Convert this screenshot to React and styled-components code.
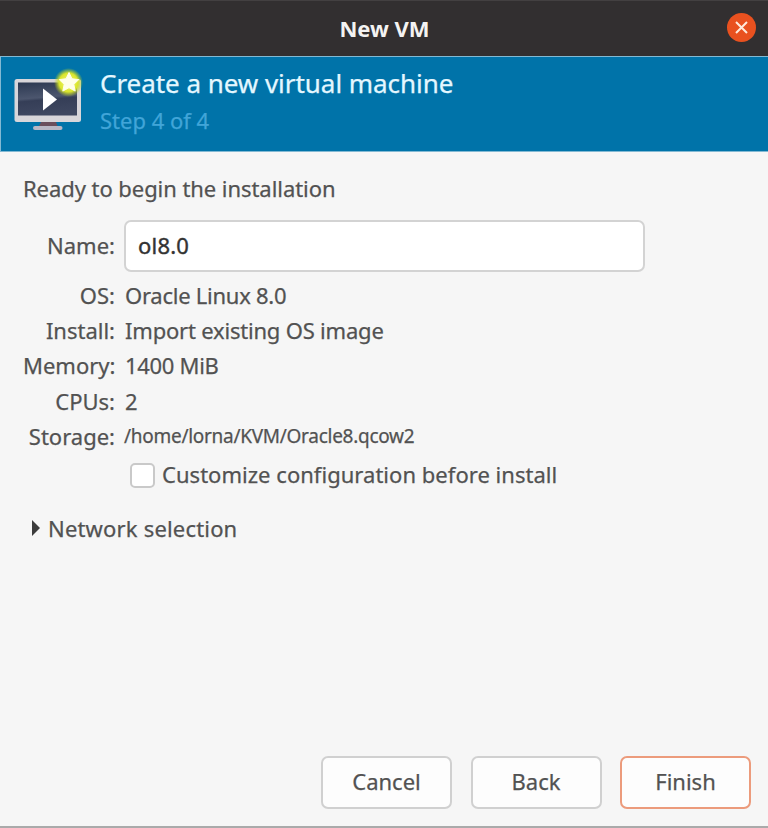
import React from "react";
import styled, { createGlobalStyle } from "styled-components";

const Global = createGlobalStyle`
  *, *::before, *::after { box-sizing: border-box; }
  body { margin: 0; background: #f6f6f6; }
`;

const Window = styled.main`
  display: flex;
  flex-direction: column;
  width: 768px;
  height: 828px;
  overflow: hidden;
  background: #f6f6f6;
  border-bottom: 2px solid #aaaaaa;
  color: #525252;
  font: 400 22px/30px "Noto Sans", sans-serif;
  -webkit-text-stroke: 0.25px currentColor;
  white-space: nowrap;
`;

const Text = styled.span`
  letter-spacing: ${(p) => p.$track || 0}px;
`;

const TitleBar = styled.header`
  display: grid;
  grid-template-columns: 60px 1fr 60px;
  align-items: center;
  height: 56px;
  padding-bottom: 2px;
  background: #322f30;
  border-top: 1px solid #434041;
  color: #f4f3f2;
  font-size: 22px;
  font-weight: 700;
  text-align: center;
  -webkit-text-stroke: 0;
`;

const TitleText = styled(Text)`
  grid-column: 2;
  padding-left: 1px;
`;

const CloseButton = styled.button`
  grid-column: 3;
  display: grid;
  place-items: center;
  width: 29px;
  height: 29px;
  margin-left: 19px;
  padding: 0;
  border: 0;
  border-radius: 50%;
  background: #e9511f;
`;

const Banner = styled.section`
  display: flex;
  flex: none;
  height: 96px;
  padding: 10px 0 0 13px;
  background: #0073a9;
  border: 1px solid #83b9d3;
  border-width: 1px 0 1px 1px;
`;

const BannerText = styled.div`
  display: flex;
  flex-direction: column;
  margin-left: 16px;
`;

const Heading = styled.h1`
  margin: 0;
  color: #e4f7ff;
  font-size: 26px;
  font-weight: 400;
  line-height: 32px;
`;

const Step = styled.p`
  margin: 6px 0 0;
  color: #41a5d8;
  line-height: 30px;
`;

const Body = styled.section`
  display: flex;
  flex: 1;
  flex-direction: column;
  padding: 21px 17px 17px 23px;
`;

const Intro = styled.p`
  margin: 0;
  height: 47px;
`;

const Row = styled.div`
  display: grid;
  grid-template-columns: 92px 1fr;
  column-gap: 9px;
  align-items: center;
  height: ${(p) => p.$height || 35.4}px;
`;

const Label = styled.span`
  text-align: right;
  padding-bottom: ${(p) => (p.$raised ? 2 : 0)}px;
`;

const Value = styled(Text)`
  padding-left: 1px;
`;

const NameField = styled.input`
  width: 521px;
  height: 52px;
  padding: 0 12px 2px;
  border: 2px solid #d3d3d3;
  border-radius: 7px;
  outline: none;
  background: #fff;
  color: #333;
  font: inherit;
  letter-spacing: 0.2px;
  -webkit-text-stroke: 0.4px currentColor;
`;

const Details = styled.div`
  margin-top: 5px;
`;

const Path = styled(Text)`
  font-size: 19px;
`;

const CheckRow = styled.label`
  display: flex;
  align-items: center;
  gap: 7px;
  height: 40px;
  margin-left: 107px;
`;

const CheckBox = styled.input`
  appearance: none;
  width: 25px;
  height: 25px;
  margin: 3px 0 0;
  border: 2px solid #c9c9c9;
  border-radius: 5px;
  background: #fff;
`;

const Expander = styled.div`
  display: flex;
  align-items: center;
  gap: 8px;
  margin: 19px 0 0 9px;
`;

const Actions = styled.footer`
  display: flex;
  justify-content: flex-end;
  gap: 18.500px;
  margin-top: auto;
`;

const Button = styled.button`
  width: 131px;
  height: 53px;
  padding: 0 0 3px;
  border: 2px solid ${(p) => (p.$primary ? "#ec9b7c" : "#d0d0d0")};
  border-radius: 7px;
  background: #fdfdfd;
  color: #525252;
  font: inherit;
  -webkit-text-stroke: inherit;
`;

function MonitorIcon() {
  return (
    <svg width="70" height="66" viewBox="0 -1 70 66">
      <defs>
        <linearGradient id="screen" x1="0" y1="0" x2="0.15" y2="1">
          <stop offset="0" stopColor="#2b3851" />
          <stop offset=".5" stopColor="#4c566e" />
          <stop offset=".58" stopColor="#353e57" />
          <stop offset="1" stopColor="#3e4760" />
        </linearGradient>
        <radialGradient id="glow">
          <stop offset="0" stopColor="#f8f97c" />
          <stop offset=".65" stopColor="#d9e52b" />
          <stop offset="1" stopColor="#b6cf22" stopOpacity="0" />
        </radialGradient>
      </defs>
      <rect x="0.5" y="11" width="66.500" height="43" rx="2.500" fill="#d8d6da" />
      <rect x="4" y="14.500" width="59" height="33" fill="url(#screen)" />
      <path d="M27 54h15l1.500 4H25z" fill="#6b4f5c" />
      <rect x="19" y="58" width="29.500" height="4" rx="2" fill="#b9b7c4" />
      <path d="M29 20.500v22l14-11z" fill="#fff" />
      <circle cx="54.500" cy="14.500" r="14.500" fill="url(#glow)" />
      <path d="M55 4.500l3 6.300 6.800.8-5 4.700 1.400 6.800-6.200-3.400-6.200 3.400 1.400-6.800-5-4.700 6.800-.8z" fill="#ffffe8" stroke="#ffffe8" strokeLinejoin="round" />
    </svg>
  );
}

export default function App() {
  return (
    <Window>
      <Global />
      <TitleBar>
        <TitleText>New VM</TitleText>
        <CloseButton aria-label="Close">
          <svg width="13" height="13" viewBox="0 0 13 13" stroke="#ffeadb" strokeWidth="2">
            <path d="M1 1l11 11M12 1L1 12" />
          </svg>
        </CloseButton>
      </TitleBar>
      <Banner>
        <MonitorIcon />
        <BannerText>
          <Heading><Text $track={-0.04}>Create a new virtual machine</Text></Heading>
          <Step><Text>Step 4 of 4</Text></Step>
        </BannerText>
      </Banner>
      <Body>
        <Intro><Text $track={-0.06}>Ready to begin the installation</Text></Intro>
        <Row $height={52}><Label $raised>Name:</Label><NameField defaultValue="ol8.0" aria-label="Name" /></Row>
        <Details>
          <Row><Label>OS:</Label><Value $track={-0.25}>Oracle Linux 8.0</Value></Row>
          <Row><Label>Install:</Label><Value $track={-0.2}>Import existing OS image</Value></Row>
          <Row><Label>Memory:</Label><Value $track={-0.3}>1400 MiB</Value></Row>
          <Row><Label>CPUs:</Label><Value>2</Value></Row>
          <Row><Label>Storage:</Label><Path $track={-0.28}>/home/lorna/KVM/Oracle8.qcow2</Path></Row>
        </Details>
        <CheckRow><CheckBox type="checkbox" /><Text $track={0.03}>Customize configuration before install</Text></CheckRow>
        <Expander>
          <svg width="8" height="16" viewBox="0 0 8 16"><path d="M0 0v16l8-8z" fill="#3c3c3c" /></svg>
          <Text $track={0.18}>Network selection</Text>
        </Expander>
        <Actions><Button>Cancel</Button><Button>Back</Button><Button $primary>Finish</Button></Actions>
      </Body>
    </Window>
  );
}
